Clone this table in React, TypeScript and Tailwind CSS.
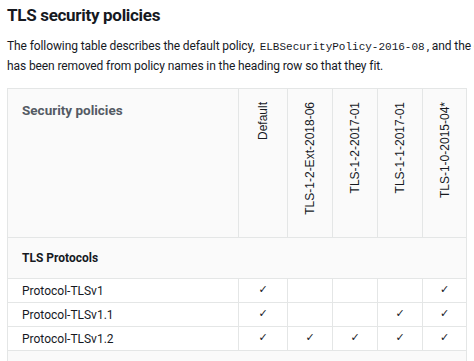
const policies = ["Default", "TLS-1-2-Ext-2018-06", "TLS-1-2-2017-01", "TLS-1-1-2017-01", "TLS-1-0-2015-04*"];

const rows: { name: string; checks: boolean[] }[] = [
  { name: "Protocol-TLSv1", checks: [true, false, false, false, true] },
  { name: "Protocol-TLSv1.1", checks: [true, false, false, true, true] },
  { name: "Protocol-TLSv1.2", checks: [true, true, true, true, true] },
];

const colWidths = ["w-[49px]", "w-[45px]", "w-[45px]", "w-[45px]", "w-[44px]"];

export default function App() {
  return (
    <div className="h-[361px] w-[474px] overflow-hidden bg-white pl-[7px] text-[#16191f] [font-family:Roboto,sans-serif]">
      <h2 className="pt-[2px] text-[17px] font-bold leading-[26px] tracking-[-0.3px]">TLS security policies</h2>
      <p className="mt-[9px] w-[600px] text-[12px] leading-[19px] tracking-[-0.1px]">
        <span className="whitespace-nowrap">
          The following table describes the default policy,{" "}
          <code className="px-[2px] text-[11px] tracking-normal text-[#16191f] [font-family:'Liberation_Mono',monospace]">ELBSecurityPolicy-2016-08</code>, and the
          other policies.
        </span>
        <br />
        has been removed from policy names in the heading row so that they fit.
      </p>

      <table className="mt-[12px] w-[459px] table-fixed border-collapse border border-[#e4e6e6] text-[12px]">
        <colgroup>
          <col className="w-[231px]" />
          {colWidths.map((w, i) => (
            <col key={i} className={w} />
          ))}
        </colgroup>
        <thead>
          <tr className="h-[149px] bg-[#fafafa]">
            <th className="border border-[#e4e6e6] px-[14px] pt-[11px] text-left align-top text-[13.5px] font-bold text-[#545b64]">
              Security policies
            </th>
            {policies.map((p) => (
              <th key={p} className="border border-[#e4e6e6] pt-[13px] align-top font-normal">
                <div className="flex justify-center">
                  <span className="rotate-180 text-[12px] leading-[14px] text-[#16191f] [font-family:'Liberation_Sans',Arial,sans-serif] [writing-mode:vertical-rl]">
                    {p}
                  </span>
                </div>
              </th>
            ))}
          </tr>
        </thead>
        <tbody>
          <tr className="h-[41px] bg-[#fafafa]">
            <td className="border-y border-[#e4e6e6] px-[14px] font-bold text-[#16191f]">TLS Protocols</td>
            <td colSpan={5} className="border-y border-[#e4e6e6]" />
          </tr>
          {rows.map((r) => (
            <tr key={r.name} className="h-[24px]">
              <td className="border border-[#e4e6e6] px-[14px]">{r.name}</td>
              {r.checks.map((c, i) => (
                <td
                  key={i}
                  className="border border-[#e4e6e6] text-center text-[11px] [font-family:'DejaVu_Sans',sans-serif]"
                >
                  {c ? "✓" : ""}
                </td>
              ))}
            </tr>
          ))}
          <tr className="h-[24px] bg-[#fafafa]">
            <td colSpan={6} className="border-y border-[#e4e6e6]" />
          </tr>
        </tbody>
      </table>
    </div>
  );
}
